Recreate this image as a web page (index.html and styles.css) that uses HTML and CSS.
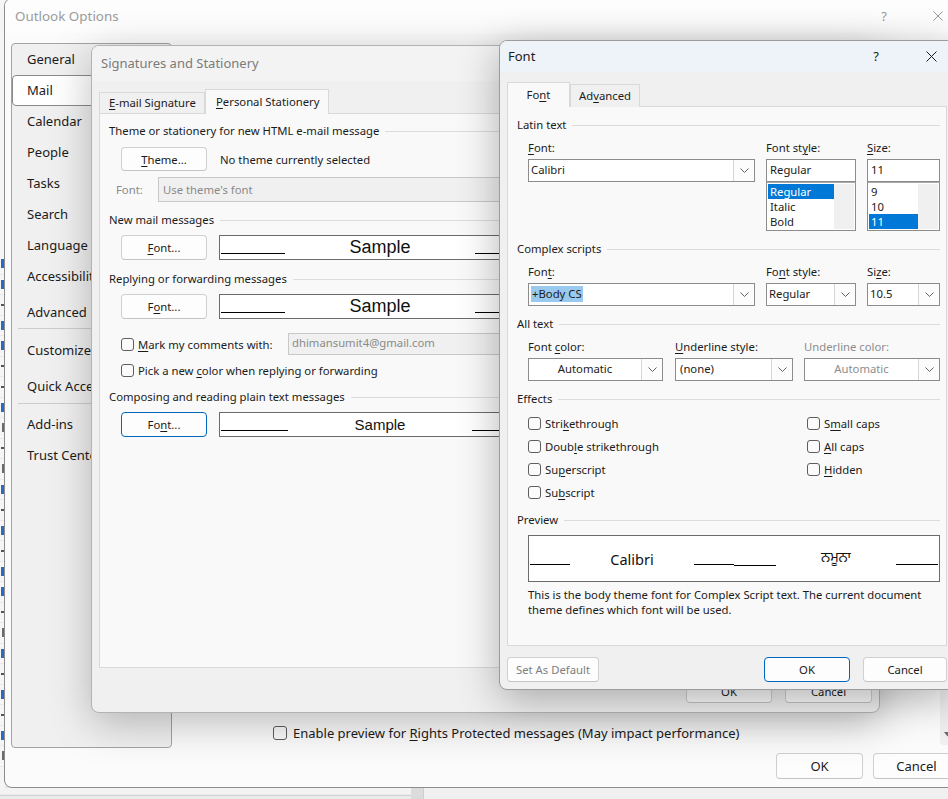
FILE: index.html
```html
<!DOCTYPE html>
<html lang="en">
<head>
<meta charset="utf-8">
<title>Outlook Options</title>
<link rel="stylesheet" href="styles.css">
</head>
<body>
<div class="bg-strip">
  <div class="bg-marks">
    <div class="mr"><i class="mk b"></i></div><div class="mr"><i class="mk b"></i></div><div class="mr"><i class="mk d"></i></div><div class="mr"><i class="mk b"></i></div><div class="mr"><i class="mk b"></i></div><div class="mr"><i class="mk d"></i></div><div class="mr"><i class="mk d"></i></div><div class="mr"><i class="mk b"></i></div><div class="mr"><i class="mk g"></i></div><div class="mr"><i class="mk d"></i></div><div class="mr"><i class="mk g"></i></div><div class="mr"><i class="mk b"></i></div><div class="mr"><i class="mk d"></i></div><div class="mr"><i class="mk b"></i></div><div class="mr"><i class="mk d"></i></div><div class="mr"><i class="mk b"></i></div><div class="mr"><i class="mk b"></i></div><div class="mr"><i class="mk d"></i></div><div class="mr"><i class="mk g"></i></div><div class="mr"><i class="mk b"></i></div><div class="mr"><i class="mk d"></i></div><div class="mr"><i class="mk b"></i></div><div class="mr"><i class="mk d"></i></div><div class="mr"><i class="mk b"></i></div><div class="mr"><i class="mk g"></i></div>
  </div>
</div>
<div class="bg-bottom"><div class="bb-a"></div><div class="bb-b"></div><div class="bb-c"></div></div>

<section class="win options">
  <header class="opt-title">
    <span class="opt-name">Outlook Options</span>
    <span class="help">?</span>
    <span class="close"><svg width="10" height="10" viewBox="0 0 10 10"><path d="M0.5 0.5L9.5 9.5M9.5 0.5L0.5 9.5" stroke="currentColor" stroke-width="1"/></svg></span>
  </header>
  <div class="opt-main">
    <nav class="opt-nav">
      <div class="nav-item">General</div>
      <div class="nav-item sel">Mail</div>
      <div class="nav-item">Calendar</div>
      <div class="nav-item">People</div>
      <div class="nav-item">Tasks</div>
      <div class="nav-item">Search</div>
      <div class="nav-item">Language</div>
      <div class="nav-item">Accessibility</div>
      <div class="nav-item gap5">Advanced</div>
      <div class="nav-sep"></div>
      <div class="nav-item gap6">Customize Ribbon</div>
      <div class="nav-item gap5">Quick Access Toolbar</div>
      <div class="nav-sep gap1"></div>
      <div class="nav-item gap5">Add-ins</div>
      <div class="nav-item">Trust Center</div>
    </nav>
    <div class="opt-content">
      <div class="opt-body">
        <label class="chk big"><span class="cb"></span><span>Enable preview for <u>R</u>ights Protected messages (May impact performance)</span></label>
      </div>
      <div class="opt-sb"><svg width="7" height="5" viewBox="0 0 7 5"><path d="M0 0H7L3.5 4.5Z" fill="#6b6b6b"/></svg></div>
    </div>
  </div>
  <footer class="opt-foot">
    <button class="btn big">OK</button>
    <button class="btn big">Cancel</button>
  </footer>
</section>

<section class="win sig">
  <header class="sig-title">Signatures and Stationery</header>
  <div class="tabs sig-tabs">
    <div class="tab t-sig"><u>E</u>-mail Signature</div>
    <div class="tab on t-stat"><u>P</u>ersonal Stationery</div>
  </div>
  <div class="panel sig-panel">
    <div class="grp">Theme or stationery for new HTML e-mail message</div>
    <div class="row r-theme">
      <button class="btn fbtn"><u>T</u>heme...</button>
      <span class="note">No theme currently selected</span>
    </div>
    <div class="row r-font">
      <span class="dis-lbl">Font:</span>
      <div class="field dis wide">Use theme's font</div>
    </div>
    <div class="grp g-new">New mail messages</div>
    <div class="row r-sample">
      <button class="btn fbtn"><u>F</u>ont...</button>
      <div class="sample"><i class="ln"></i><span class="st">Sample</span><i class="ln"></i></div>
    </div>
    <div class="grp g-reply">Replying or forwarding messages</div>
    <div class="row r-sample">
      <button class="btn fbtn">F<u>o</u>nt...</button>
      <div class="sample"><i class="ln"></i><span class="st">Sample</span><i class="ln"></i></div>
    </div>
    <div class="row r-mark">
      <label class="chk mark-lbl"><span class="cb"></span><span><u>M</u>ark my comments with:</span></label>
      <div class="field dis mail">dhimansumit4@gmail.com</div>
    </div>
    <div class="row r-pick">
      <label class="chk"><span class="cb"></span><span>Pick a new <u>c</u>olor when replying or forwarding</span></label>
    </div>
    <div class="grp g-plain">Composing and reading plain text messages</div>
    <div class="row r-sample">
      <button class="btn fbtn def">Fo<u>n</u>t...</button>
      <div class="sample small"><i class="ln"></i><span class="st">Sample</span><i class="ln"></i></div>
    </div>
  </div>
  <footer class="sig-foot">
    <button class="btn sbtn">OK</button>
    <button class="btn sbtn wide">Cancel</button>
  </footer>
</section>

<section class="win fontdlg">
  <header class="fd-title">
    <span class="fd-name">Font</span>
    <span class="help dark">?</span>
    <span class="close dark fd-close"><svg width="11" height="11" viewBox="0 0 11 11"><path d="M0.5 0.5L10.5 10.5M10.5 0.5L0.5 10.5" stroke="currentColor" stroke-width="1"/></svg></span>
  </header>
  <div class="tabs fd-tabs">
    <div class="tab on t-font">Fo<u>n</u>t</div>
    <div class="tab t-adv">Ad<u>v</u>anced</div>
  </div>
  <div class="panel fd-panel">
    <div class="grp">Latin text</div>
    <div class="fd-sec">
      <div class="lbls">
        <span class="c-font"><u>F</u>ont:</span>
        <span class="c-style">Font st<u>y</u>le:</span>
        <span class="c-size"><u>S</u>ize:</span>
      </div>
      <div class="ins">
        <div class="combo c-font"><span class="v">Calibri</span><span class="dd"><svg width="9" height="5" viewBox="0 0 9 5"><path d="M0.5 0.5L4.5 4.5L8.5 0.5" fill="none" stroke="#606060"/></svg></span></div>
        <div class="stack c-style">
          <div class="tbox">Regular</div>
          <div class="list"><div class="items"><div class="it sel">Regular</div><div class="it">Italic</div><div class="it">Bold</div></div><div class="sb"></div></div>
        </div>
        <div class="stack c-size">
          <div class="tbox">11</div>
          <div class="list"><div class="items"><div class="it">9</div><div class="it">10</div><div class="it sel">11</div></div><div class="sb"></div></div>
        </div>
      </div>
    </div>

    <div class="grp gsp">Complex scripts</div>
    <div class="fd-sec">
      <div class="lbls">
        <span class="c-font">Fon<u>t</u>:</span>
        <span class="c-style">Fo<u>n</u>t style:</span>
        <span class="c-size">Si<u>z</u>e:</span>
      </div>
      <div class="ins">
        <div class="combo c-font"><span class="v"><span class="hl">+Body CS</span></span><span class="dd"><svg width="9" height="5" viewBox="0 0 9 5"><path d="M0.5 0.5L4.5 4.5L8.5 0.5" fill="none" stroke="#606060"/></svg></span></div>
        <div class="combo c-style"><span class="v">Regular</span><span class="dd"><svg width="9" height="5" viewBox="0 0 9 5"><path d="M0.5 0.5L4.5 4.5L8.5 0.5" fill="none" stroke="#606060"/></svg></span></div>
        <div class="combo c-size"><span class="v">10.5</span><span class="dd"><svg width="9" height="5" viewBox="0 0 9 5"><path d="M0.5 0.5L4.5 4.5L8.5 0.5" fill="none" stroke="#606060"/></svg></span></div>
      </div>
    </div>

    <div class="grp gsp">All text</div>
    <div class="fd-sec">
      <div class="lbls">
        <span class="c-color">Font <u>c</u>olor:</span>
        <span class="c-ustyle"><u>U</u>nderline style:</span>
        <span class="c-ucolor dis-t">Underline color:</span>
      </div>
      <div class="ins ins2">
        <div class="combo c-color"><span class="v center">Automatic</span><span class="dd"><svg width="9" height="5" viewBox="0 0 9 5"><path d="M0.5 0.5L4.5 4.5L8.5 0.5" fill="none" stroke="#606060"/></svg></span></div>
        <div class="combo c-ustyle"><span class="v pad">(none)</span><span class="dd"><svg width="9" height="5" viewBox="0 0 9 5"><path d="M0.5 0.5L4.5 4.5L8.5 0.5" fill="none" stroke="#606060"/></svg></span></div>
        <div class="combo c-ucolor"><span class="v center dis-t">Automatic</span><span class="dd"><svg width="9" height="5" viewBox="0 0 9 5"><path d="M0.5 0.5L4.5 4.5L8.5 0.5" fill="none" stroke="#606060"/></svg></span></div>
      </div>
    </div>

    <div class="grp gsp">Effects</div>
    <div class="effects">
      <label class="chk"><span class="cb"></span><span>Stri<u>k</u>ethrough</span></label>
      <label class="chk"><span class="cb"></span><span>S<u>m</u>all caps</span></label>
      <label class="chk"><span class="cb"></span><span>Doub<u>l</u>e strikethrough</span></label>
      <label class="chk"><span class="cb"></span><span><u>A</u>ll caps</span></label>
      <label class="chk"><span class="cb"></span><span>Su<u>p</u>erscript</span></label>
      <label class="chk"><span class="cb"></span><span><u>H</u>idden</span></label>
      <label class="chk"><span class="cb"></span><span>Su<u>b</u>script</span></label>
    </div>

    <div class="grp gpre">Preview</div>
    <div class="preview">
      <i class="pl pl-a"></i>
      <span class="pt pt-lat">Calibri</span>
      <i class="pl pl-b1"></i><i class="pl pl-b2"></i>
      <span class="pt pt-gur">ਨਮੂਨਾ</span>
      <i class="pl pl-c"></i>
    </div>
    <p class="desc">This is the body theme font for Complex Script text. The current document<br>theme defines which font will be used.</p>
  </div>
  <footer class="fd-foot">
    <button class="btn dis fb-def">Set As Default</button>
    <span class="spacer"></span>
    <button class="btn def fb-ok">OK</button>
    <button class="btn fb-cancel">Cancel</button>
  </footer>
</section>
</body>
</html>
```

FILE: styles.css
```css
* { box-sizing: border-box; margin: 0; padding: 0; }
html, body { width: 948px; height: 799px; overflow: hidden; }
body {
  position: relative;
  background: #e6e6e6;
  font-family: "Noto Sans", "Segoe UI", sans-serif;
  font-size: 11.3px;
  line-height: 15px;
  color: #1b1b1b;
}
u { text-decoration: underline; text-underline-offset: 2px; text-decoration-thickness: 1px; }
button { font: inherit; color: inherit; cursor: default; }
i { font-style: normal; display: block; }

/* ---------- backdrop ---------- */
.bg-strip {
  position: absolute; left: 0; top: 0; width: 5px; height: 790px;
  overflow: hidden; background: #f5f5f5;
  border-top: 16px solid #f5f5f5;
}
.bg-marks { padding-top: 238px; }
.mr { height: 20.5px; display: flex; align-items: center; justify-content: flex-end; padding-right: 1px; border-bottom: 1px solid #e9e9e9; }
.mk { width: 3px; height: 9px; }
.mk.b { background: #2a6ac4; }
.mk.d { height: 2px; background: #555; }
.mk.g { width: 2px; background: #6a6a6a; }
.bg-bottom {
  position: absolute; left: 0; top: 788px; width: 948px; height: 11px;
  background: #ebebeb; display: flex;
}
.bb-a { width: 411px; border-top: 6px solid #f3f3f3; border-bottom: 1px solid #d3d3d3; height: 8px; }
.bb-b { width: 12px; background: #dcdcdc; }
.bb-c { flex: 1; border-left: 1px solid #cfcfcf; background: #f0f0f0; }

/* ---------- windows ---------- */
.win { position: absolute; border: 1px solid #a9a9a9; border-radius: 8px; overflow: hidden; }

/* Outlook Options */
.options {
  left: 4px; top: -2px; width: 958px; height: 790px;
  background: #fbfbfb; border-color: #8d8d8d; z-index: 1;
  display: flex; flex-direction: column;
}
.opt-title {
  height: 34px; flex: none; display: flex; align-items: center;
  padding-left: 10px; font-size: 13.4px; color: #9b9b9b; background: #fdfdfd;
}
.opt-name { flex: 1; }
.help { width: 30px; text-align: center; font-size: 13px; }
.close { width: 46px; margin-left: 16px; display: flex; justify-content: center; align-items: center; }
.help.dark, .close.dark { color: #1b1b1b; }
.fd-close { margin-left: 17px; }

.opt-main { flex: none; height: 705px; margin-top: 10px; display: flex; }
.opt-nav {
  width: 161px; flex: none; margin-left: 6px;
  border: 1px solid #a3a3a3; border-radius: 4px; background: #f0f0f0;
  font-size: 13px; line-height: 31px; color: #1b1b1b; overflow: hidden;
}
.nav-item { height: 31px; padding-left: 15px; white-space: nowrap; overflow: hidden; }
.nav-item.sel {
  background: #fff; border: 1px solid #8a8a8a; border-radius: 4px;
  padding-left: 14px; line-height: 29px; margin-right: 2px;
}
.nav-sep { height: 1px; background: #cdcdcd; margin: 0 4px 0 6px; }
.gap1 { margin-top: 1px; }
.gap5 { margin-top: 5px; }
.gap6 { margin-top: 6px; }

.opt-content { flex: 1; display: flex; }
.opt-body {
  flex: 1; display: flex; flex-direction: column; justify-content: flex-end;
  padding: 0 0 5px 101px;
}
.opt-sb {
  width: 14px; margin: 0 7px 3px 0; background: #efefef; border-radius: 4px;
  display: flex; align-items: flex-end; justify-content: center; padding-bottom: 8px;
}
.opt-foot { flex: none; display: flex; justify-content: flex-end; gap: 10px; padding: 5px 1px 0 0; }

/* generic controls */
.btn {
  height: 24px; border: 1px solid #d0d0d0; border-radius: 4px; background: #fdfdfd;
  display: flex; align-items: center; justify-content: center; white-space: nowrap;
  border-bottom-color: #c4c4c4;
}
.btn.def { border-color: #0067c0; }
.btn.dis { color: #7f7f7f; }
.btn.big { width: 87px; height: 26px; font-size: 13px; }

.cb {
  width: 13px; height: 13px; flex: none;
  border: 1px solid #5e5e5e; border-radius: 3px; background: #fbfbfb; margin-right: 4px;
}
.chk { display: flex; align-items: center; white-space: nowrap; }
.chk.big { height: 20px; font-size: 13px; }
.chk.big .cb { width: 14px; height: 14px; margin-right: 6px; }

.grp { display: flex; align-items: center; gap: 6px; height: 16px; line-height: 16px; white-space: nowrap; }
.grp::after { content: ""; flex: 1; border-top: 1px solid #dcdcdc; }

.tabs { display: flex; align-items: flex-start; height: 25px; margin-left: 7px; }
.tab {
  height: 21px; margin-top: 3px; border: 1px solid #d9d9d9; border-bottom: none;
  background: #f0f0f0; line-height: 20px; white-space: nowrap;
}
.tab.on { height: 25px; margin-top: 0; background: #f9f9f9; position: relative; z-index: 1; line-height: 23px; }
.panel { background: #f9f9f9; border: 1px solid #d9d9d9; margin: -1px 7px 0; }

/* ---------- Signatures and Stationery ---------- */
.sig {
  left: 91px; top: 45px; width: 789px; height: 668px;
  background: #f0f0f0; border-color: #b3b3b3; z-index: 2;
  box-shadow: 0 10px 42px rgba(0, 0, 0, 0.26);
}
.sig-title { height: 35px; background: #f3f3f3; padding-left: 9px; font-size: 13px; line-height: 35px; color: #7b7b7b; }
.sig-tabs { margin-top: 8px; }
.t-sig { width: 106px; padding-left: 9px; }
.t-stat { width: 124px; padding-left: 10px; }
.sig-panel { height: 555px; padding: 9px 9px 0 9px; }
.row { display: flex; align-items: center; }
.r-theme { margin: 8px 0 0 12px; }
.r-theme .note { margin-left: 13px; }
.fbtn { width: 86px; height: 24px; }
.r-sample .fbtn { height: 25px; }
.r-font { margin: 6px 0 0 7px; }
.dis-lbl { width: 42px; color: #8a8a8a; }
.field { height: 25px; border: 1px solid #c9c9c9; padding-left: 4px; line-height: 23px; white-space: nowrap; }
.field.dis { background: #f0f0f0; color: #8a8a8a; }
.field.wide { width: 420px; }
.g-new { margin-top: 10px; }
.g-reply { margin-top: 11px; }
.g-plain { margin-top: 8px; }
.r-sample { margin: 7px 0 0 12px; }
.sample {
  width: 322px; height: 25px; margin-left: 12px; border: 1px solid #6b6b6b; background: #fff;
  display: flex; align-items: center; padding: 0 1px;
}
.sample .ln { width: 64px; height: 13px; border-bottom: 1px solid #000; flex: none; }
.sample .st { flex: 1; text-align: center; font-family: "Liberation Sans", Arial, sans-serif; font-size: 18px; line-height: 23px; color: #111; }
.sample.small .ln { width: 67px; }
.sample.small .st { font-size: 15px; }
.r-mark { margin: 14px 0 0 12px; height: 22px; }
.mark-lbl { width: 167px; }
.field.mail { width: 260px; height: 22px; line-height: 18px; padding-left: 3px; }
.r-pick { margin: 4px 0 0 12px; height: 22px; }
.sig-foot { display: flex; justify-content: flex-end; gap: 13px; padding: 11px 7px 0; }
.sbtn { width: 86px; }
.sbtn.wide { width: 87px; }

/* ---------- Font dialog ---------- */
.fontdlg {
  left: 499px; top: 40px; width: 456px; height: 650px;
  background: #f0f0f0; border-color: #9c9c9c; z-index: 3;
  box-shadow: 0 10px 42px rgba(0, 0, 0, 0.3);
}
.fd-title { height: 31px; background: #eef3f9; display: flex; align-items: center; padding-left: 8px; font-size: 13px; }
.fd-name { flex: 1; }
.fd-tabs { margin-top: 10px; }
.t-font { width: 63px; text-align: center; }
.t-adv { width: 70px; text-align: center; margin-top: 2px; height: 23px; line-height: 22px; }
.fd-panel { height: 540px; padding: 10px 6px 0 9px; }
.fd-sec { margin-left: 11px; }
.gsp { margin-top: 10px; }
.gpre { margin-top: 8px; }
.lbls { display: flex; gap: 11px; height: 16px; line-height: 16px; margin-top: 7px; white-space: nowrap; }
.ins { display: flex; gap: 11px; margin-top: 3px; align-items: flex-start; }
.c-font { width: 227px; flex: none; }
.c-style { width: 90px; flex: none; }
.c-size { width: 73px; flex: none; }
.c-color { width: 135px; flex: none; }
.c-ustyle { width: 118px; flex: none; }
.c-ucolor { width: 136px; flex: none; }
.lbls .c-ustyle { margin-left: 1px; }
.ins2 .c-ustyle { margin-left: 1px; }
.dis-t { color: #8d8d8d; }

.combo { height: 23px; border: 1px solid #8c8c8c; background: #fff; display: flex; align-items: stretch; }
.combo .v { flex: 1; padding-left: 2px; white-space: nowrap; overflow: hidden; line-height: 20px; }
.combo .v.center { text-align: center; padding-left: 0; }
.combo .v.pad { padding-left: 4px; }
.combo .hl { background: #99c9ef; padding: 0 1px; display: inline-block; line-height: 16px; }
.combo .dd {
  width: 21px; flex: none; border-left: 1px solid #d6d6d6; background: #fcfcfc;
  display: flex; align-items: center; justify-content: center;
}
.stack { display: flex; flex-direction: column; }
.tbox { height: 23px; border: 1px solid #8c8c8c; background: #fff; padding-left: 3px; line-height: 20px; }
.list { height: 49px; border: 1px solid #8c8c8c; border-top-color: #a8a8a8; background: #fff; display: flex; padding: 1px; }
.items { flex: 1; }
.it { height: 15px; line-height: 15px; padding-left: 2px; }
.it.sel { background: #0078d7; color: #fff; }
.sb { width: 20px; background: #f0f0f0; }

.effects { display: grid; grid-template-columns: 279px 1fr; grid-auto-rows: 23px; margin: 5px 0 0 11px; }
.effects .chk { height: 23px; }

.preview {
  width: 412px; height: 47px; margin: 7px 0 0 11px; border: 1px solid #6b6b6b; background: #fff;
  display: flex; align-items: center;
}
.pl { height: 13px; border-bottom: 1px solid #000; flex: none; }
.pl-a { width: 40px; margin-left: 1px; }
.pl-b1 { width: 40px; margin-left: 40px; }
.pl-b2 { width: 42px; height: 14px; }
.pl-c { width: 42px; margin-left: 41px; }
.pt { flex: none; text-align: center; white-space: nowrap; color: #111; }
.pt-lat { width: 44px; margin-left: 40px; font-size: 14.5px; line-height: 20px; }
.pt-gur { width: 38px; margin-left: 41px; font-family: "Noto Sans Gurmukhi", "Raavi", "Noto Sans", sans-serif; font-size: 14px; line-height: 20px; }
.desc { margin: 5px 0 0 11px; line-height: 15px; white-space: nowrap; }

.fd-foot { display: flex; align-items: center; gap: 13px; padding: 11px 7px 0; }
.fd-foot .btn { height: 25px; }
.fb-def { width: 92px; }
.spacer { flex: 1; margin-left: -13px; }
.fb-ok { width: 86px; }
.fb-cancel { width: 84px; }
```
